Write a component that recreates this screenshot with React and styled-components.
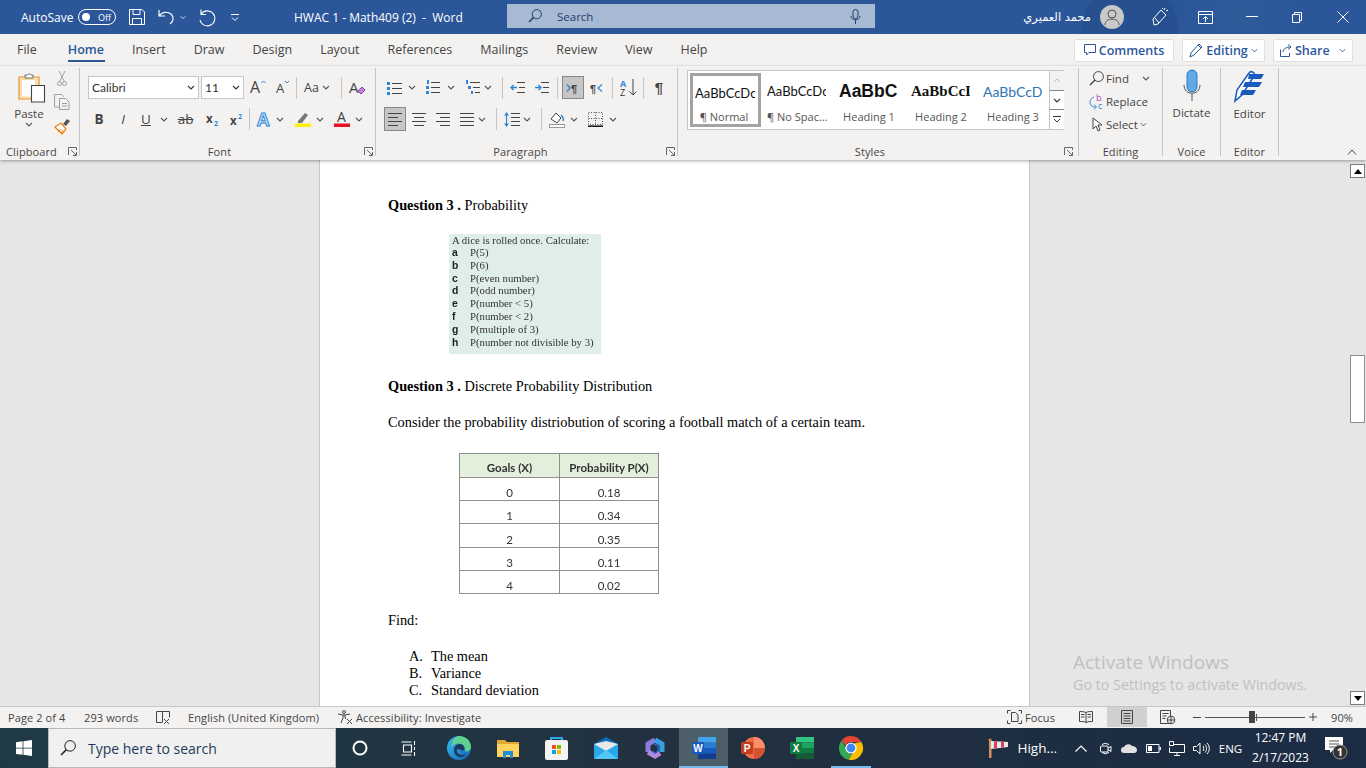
import React from 'react';
import styled, { createGlobalStyle } from 'styled-components';

const Global = createGlobalStyle`
  html, body { margin: 0; padding: 0; overflow: hidden; }
  body { font-family: "Open Sans", "Liberation Sans", sans-serif; }
  * { box-sizing: border-box; }
`;
const Shell = styled.div`display:flex;flex-direction:column;width:1366px;height:768px;overflow:hidden;background:#f3f2f1;`;
const Slot = styled.div`
  display:flex;align-items:center;flex:none;justify-content:${p => p.$j || 'center'};
  width:${p => p.$w}px;margin-left:${p => p.$l || 0}px;white-space:nowrap;height:100%;
`;
const SelBtn = styled(Slot)`background:#c8c6c4;outline:1px solid #8a8886;outline-offset:-1px;`;
const GlyphBtn = styled(Slot)`
  font-size:${p => p.$fs || 13.5}px;color:#444;font-weight:${p => p.$fw || 400};font-style:${p => p.$fi || 'normal'};
  text-decoration:${p => p.$td || 'none'};font-family:${p => p.$ff || 'inherit'};
`;
const AaBtn = styled(Slot)`font-size:12.5px;color:#444;gap:3px;`;
const SelectedView = styled(Slot)`background:#d2d0ce;`;

/* title bar */
const TitleBar = styled.header`
  display:flex;align-items:center;height:34px;flex:none;color:#fff;font-size:12px;
  background:radial-gradient(circle at 1240px 10px,#2f5a9a 0,#2b579a 55px,transparent 56px),radial-gradient(circle at 1130px 30px,#26508f 0,#26508f 48px,transparent 49px),#2b579a;
`;
const AutoToggle = styled.div`
  display:flex;align-items:center;justify-content:space-between;width:38px;height:16px;border:1px solid #fff;border-radius:8px;padding:0 4px 0 3px;font-size:9px;
  &::before{content:"";width:8px;height:8px;border-radius:50%;background:#fff;}
`;
const SearchBox = styled.div`
  display:flex;align-items:center;width:368px;height:24px;margin:0 0 2px 48px;background:#a7b9d3;color:#23406f;font-size:11.5px;flex:none;
`;
const UserName = styled.span`font-family:"DejaVu Sans",sans-serif;font-size:11.5px;`;
const Avatar = styled.div`display:flex;align-items:center;justify-content:center;width:24px;height:24px;border-radius:50%;background:#c9c9c9;flex:none;margin-left:9px;`;

/* tabs */
const TabRow = styled.nav`display:flex;align-items:center;height:32px;flex:none;padding:0 0 2px 17px;font-size:12.5px;color:#444;`;
const Tab = styled.div`
  position:relative;margin-right:${p => p.$gap || 28}px;white-space:nowrap;
  font-weight:${p => p.$on ? 600 : 400};color:${p => p.$on ? '#2b579a' : '#444'};
  ${p => p.$on && `&::after{content:"";position:absolute;left:0;right:-1px;bottom:-4px;height:2px;background:#2b579a;}`}
`;
const TabActions = styled.div`display:flex;align-items:center;gap:8px;margin:2px 0 0 auto;padding-right:13px;`;
const ActionBtn = styled.div`
  display:flex;align-items:center;justify-content:center;gap:3px;width:${p => p.$w}px;height:23px;background:#fff;border:1px solid #e1dfdd;border-radius:2px;color:#2b579a;font-weight:600;font-size:12.5px;
`;

/* ribbon */
const Ribbon = styled.section`
  display:flex;height:94px;flex:none;padding-top:2px;position:relative;z-index:2;background:#f3f2f1;box-shadow:0 1px 3px rgba(0,0,0,.35);
`;
const Group = styled.div`
  display:flex;flex-direction:column;flex:none;width:${p => p.$w}px;height:88px;border-right:1px solid #c8c6c4;
`;
const GroupBody = styled.div`height:76px;flex:none;display:flex;flex-direction:column;`;
const RowStack = styled(GroupBody)`padding-top:8px;gap:8px;`;
const Row = styled.div`display:flex;align-items:center;height:${p => p.$h || 24}px;flex:none;`;
const GroupFoot = styled.div`display:flex;align-items:center;height:14px;margin-bottom:-2px;font-size:11px;color:#484644;letter-spacing:.1px;`;
const FootLabel = styled.div`flex:1;text-align:center;`;
const Launcher = styled.div`display:flex;justify-content:flex-end;width:${p => p.$w || 14}px;padding-right:${p => p.$r || 2}px;flex:none;`;
const Combo = styled.div`
  display:flex;align-items:center;justify-content:space-between;width:${p => p.$w}px;margin-left:${p => p.$l || 0}px;height:23px;padding:0 3px;flex:none;
  background:#fff;border:1px solid #c8c6c4;font-size:12px;color:#333;font-family:"Lato","Open Sans",sans-serif;
`;
const VSep = styled.div`width:1px;height:22px;background:#c8c6c4;flex:none;margin-left:${p => p.$l || 0}px;`;
const PasteCol = styled.div`display:flex;flex-direction:column;align-items:center;width:58px;padding-top:4px;flex:none;font-size:11.5px;color:#444;`;
const PasteIcon = styled.div`margin-left:5px;`;
const PasteLabel = styled.div`margin-top:3px;line-height:16px;`;
const SideCol = styled.div`display:flex;flex-direction:column;align-items:center;width:14px;padding-top:3px;margin-left:-3px;`;
const SideItem = styled.div`display:flex;justify-content:center;width:16px;flex:none;margin-top:${p => p.$mt}px;`;
const ClipRow = styled.div`display:flex;`;

const Gallery = styled.div`display:flex;margin:2px 0 0 9px;width:377px;height:60px;background:#fff;border:1px solid #c8c6c4;`;
const StyleItem = styled.div`
  flex:none;width:${p => p.$sel ? '71px' : '72px'};height:${p => p.$sel ? '54px' : '58px'};margin:${p => p.$sel ? '2px 0 0 2px' : '0'};padding-left:${p => p.$sel ? '2px' : '6px'};
  ${p => p.$sel ? 'border:3px solid #a5a3a1;' : ''}
`;
const Preview = styled.div`
  height:${p => p.$sel ? '34px' : '39px'};width:${p => p.$sel ? '60px' : '59px'};overflow:hidden;white-space:nowrap;display:flex;align-items:center;
  padding-top:${p => p.$sel ? '0' : '1px'};
  font:${p => p.$font};color:${p => p.$color || '#111'};
`;
const StyleName = styled.div`font-size:11px;color:#555;white-space:nowrap;text-align:center;width:${p => p.$sel ? '58px' : '60px'};line-height:14px;`;
const GalleryBtns = styled.div`display:flex;flex-direction:column;margin-left:auto;width:15px;flex:none;`;
const GalleryBtn = styled.div`display:flex;align-items:center;justify-content:center;flex:1;border-left:1px solid #c8c6c4;border-top:${p => p.$first ? 'none' : '1px solid #8a8886'};background:${p => p.$first ? '#f3f2f1' : '#fff'};`;
const StackCol = styled(GroupBody)`padding:0 0 0 10px;margin-top:-1px;margin-bottom:1px;font-size:11.5px;color:#444;`;
const EditRow = styled.div`display:flex;align-items:center;height:23px;gap:2px;`;
const BigCol = styled(GroupBody)`align-items:center;padding-top:2px;font-size:11.5px;color:#444;`;
const BigLabel = styled.div`margin-top:4px;line-height:16px;`;
const Collapse = styled.div`flex:1;display:flex;align-items:flex-end;justify-content:flex-end;padding:0 9px 5px 0;`;

/* document */
const DocArea = styled.main`display:flex;flex:1;min-height:0;background:#e6e6e6;position:relative;`;
const Page = styled.article`
  width:711px;margin-left:319px;height:100%;overflow:hidden;flex:none;background:#fff;border-left:1px solid #c6c6c6;border-right:1px solid #c6c6c6;
  padding:36px 0 0 68px;font-family:"Liberation Serif",serif;font-size:14.34px;color:#000;
`;
const Line = styled.div`height:${p => p.$h || 18}px;line-height:18px;margin-top:${p => p.$mt || 0}px;white-space:nowrap;`;
const ListLine = styled(Line)`display:flex;padding-left:21px;`;
const Marker = styled.span`width:22px;flex:none;`;
const Exercise = styled.div`
  width:152px;height:120px;margin:20px 0 0 61px;background:#dfeeeb;padding:0 3px;color:#333;font-size:10.75px;line-height:12.75px;filter:blur(.35px);
`;
const ExTop = styled.div`height:12px;`;
const ExRow = styled.div`display:flex;align-items:baseline;height:12.8px;white-space:nowrap;`;
const ExKey = styled.span`width:18px;flex:none;font-family:"Liberation Sans",sans-serif;font-weight:700;font-size:10.4px;color:#222;`;
const DataTable = styled.table`
  border-collapse:collapse;width:200px;height:140px;margin:22px 0 0 71px;font-family:"Lato","Open Sans",sans-serif;font-size:11.5px;color:#333;filter:blur(.2px);
  th,td{border:1px solid #8f8f8f;text-align:center;padding:0;vertical-align:bottom;padding-bottom:1px;}
  th{background:#e2efda;font-weight:700;height:24px;padding-bottom:3px;}
  td{height:23.2px;}
`;
const GoalsHead = styled.th`width:100px;`;
const Scroller = styled.aside`display:flex;flex-direction:column;align-items:center;width:17px;margin-left:auto;padding:4px 0 1px 0;`;
const ArrowBtn = styled.div`display:flex;align-items:center;justify-content:center;width:15px;height:14px;background:#fff;border:1px solid #7a7a7a;flex:none;`;
const Thumb = styled.div`width:15px;height:68px;margin-top:177px;margin-bottom:auto;background:#fff;border:1px solid #8f8f8f;flex:none;`;
const Watermark = styled.div`position:absolute;left:1073px;top:490px;color:#c0c0c0;pointer-events:none;white-space:nowrap;font-family:"Open Sans",sans-serif;`;
const WmBig = styled.div`font-size:19px;line-height:24px;`;
const WmSmall = styled.div`font-size:14.3px;line-height:22px;`;

/* status */
const StatusBar = styled.footer`
  display:flex;align-items:center;height:22px;flex:none;background:#f3f2f1;border-top:1px solid #c8c6c4;font-size:11px;letter-spacing:.1px;color:#444;padding-bottom:1px;
`;
const ZoomTrack = styled.div`width:100px;height:1px;background:#555;margin-left:4px;flex:none;position:relative;`;
const ZoomKnob = styled.div`position:absolute;left:44px;top:-6px;width:6px;height:12px;background:#444;`;
const ZoomTick = styled.div`position:absolute;left:51px;top:-3px;width:1px;height:7px;background:#555;`;

/* taskbar */
const TaskBar = styled.footer`
  display:flex;align-items:stretch;height:40px;flex:none;color:#fff;background:linear-gradient(90deg,#1f3a46 0,#22313f 50%,#1a2b44 100%);
`;
const TaskSearch = styled.div`
  display:flex;align-items:center;width:288px;background:#f0f0f0;border:1px solid #b8b8b8;padding-left:11px;color:#1f3a5a;font-size:14px;gap:12px;flex:none;
`;
const TaskApp = styled.div`
  display:flex;align-items:center;justify-content:center;flex:none;width:${p => p.$w || 49}px;margin-left:${p => p.$l || 0}px;
  ${p => p.$active && 'background:#4c5e68;'}
  ${p => p.$bar && 'box-shadow:inset 0 -2px 0 #76b9ed;'}
`;
const TrayText = styled(Slot)`font-size:${p => p.$fs || 12}px;color:#fff;`;
const Clock = styled.div`display:flex;flex-direction:column;align-items:center;width:76px;margin-left:${p => p.$l}px;font-size:12px;line-height:20px;flex:none;justify-content:center;`;

/* icons */
const Chev = ({ c = '#555', w = 8 }) => <svg width={w} height="5" viewBox="0 0 8 5"><path d="M1 1l3 3 3-3" stroke={c} strokeWidth="1.1" fill="none" /></svg>;
const S = ({ w, h, children }) => <svg width={w} height={h} viewBox={`0 0 ${w} ${h}`} style={{ display: 'block', overflow: 'visible' }}>{children}</svg>;
const L = ({ d, c = '#444', sw = 1 }) => <path d={d} stroke={c} strokeWidth={sw} fill="none" />;
const Launch = () => <S w={9} h={9}><L d="M.5 8V.5H8.5V3M3 3l5.5 5.5M5 8.5h3.5V5" c="#666" /></S>;
const Blue = '#2b88d8';
const Bullet = () => <S w={15} h={14}><path d="M0 1h3v3H0zM0 6h3v3H0zM0 11h3v3H0z" fill={Blue} /><L d="M5 2.5h10M5 7.5h10M5 12.5h10" /></S>;
const Numbered = () => <S w={14} h={15}><path d="M1 0h2v4H1zM0 6h3v3H0zM0 11h3v3H0z" fill={Blue} /><L d="M5 2.5h9M5 7.5h9M5 12.5h9" /></S>;
const Multi = () => <S w={15} h={15}><path d="M1 0h2v4H1zM3 6h3v3H3zM6 11h2v3H6z" fill={Blue} /><L d="M5 2.5h10M8 7.5h7M10 12.5h5" /></S>;
const Indent = ({ inc }) => <S w={14} h={11}><L d="M6 .5h8M8 5.5h6M6 10.5h8" /><L d={inc ? 'M0 5.5h6M3.5 3l2.5 2.5L3.5 8' : 'M6 5.5H0M2.5 3L0 5.5 2.5 8'} c={Blue} sw={1.4} /></S>;
const Align = ({ type }) => {
  const m = {
    l: 'M0 .5h14M0 4.5h10M0 8.5h14M0 12.5h10',
    c: 'M0 .5h14M2 4.5h10M0 8.5h14M2 12.5h10',
    r: 'M0 .5h14M4 4.5h10M0 8.5h14M4 12.5h10',
    j: 'M0 .5h14M0 4.5h14M0 8.5h14M0 12.5h14',
  };
  return <S w={14} h={13}><L d={m[type]} /></S>;
};
const FontA = ({ size = 16 }) => <text x="0" y="13" fontSize={size} fill="#444" fontFamily="Open Sans">A</text>;

const Paste = () => (
  <S w={28} h={31}>
    <path d="M1 5h20v22H1z" fill="#fce4b6" stroke="#e8912d" strokeWidth="1.2" />
    <path d="M3.5 7.5h14V25h-14z" fill="#fff" stroke="#f5d79e" />
    <path d="M7 6V3h2.5a2 2 0 0 1 3.5 0H15v3z" fill="#fff" stroke="#666" />
    <path d="M13.5 13.5h13v16.5h-13z" fill="#fff" stroke="#444" strokeWidth="1.1" />
  </S>
);
const Cut = () => <S w={10} h={15}><L d="M2 0l5 10M8 0L3 10" c="#a19f9d" /><circle cx="2.5" cy="12.5" r="2" fill="none" stroke="#a19f9d" /><circle cx="7.5" cy="12.5" r="2" fill="none" stroke="#a19f9d" /></S>;
const CopyI = () => <S w={16} h={16}><L d="M.5.5h7l2 2V3M.5.5V13H5M5.5 4.5h6l3.5 3.5v7.500h-9.500zM8 9.500h5M8 12h5" c="#a19f9d" /></S>;
const Painter = () => <S w={16} h={16}><path d="M1 9l6-4 5 6-4 5z" fill="#fff" stroke="#e8811a" strokeWidth="1.3" /><path d="M4 14l3-3M7 15l2-3" stroke="#e8811a" /><path d="M9 6l4-5 3 2-4 5z" fill="#555" /></S>;

const Sort = () => <S w={18} h={18}><text x="0" y="8" fontSize="9" fontWeight="700" fill={Blue} fontFamily="Open Sans">A</text><text x="0" y="17" fontSize="9" fill="#333" fontFamily="Open Sans">Z</text><L d="M13 0v16M9.5 12.5L13 16l3.5-3.5" /></S>;
const LineSpace = () => <S w={16} h={15}><L d="M7 1.5h9M7 5.5h9M7 9.5h9M7 13.5h9" /><path d="M2.5 0l2.5 3.5H0zM2.5 15L0 11.5h5z" fill={Blue} /><path d="M2.5 3v9" stroke={Blue} strokeWidth="1.2" /></S>;
const Shading = () => <S w={16} h={17}><path d="M2 8l5-6 5 5-4 5z" fill="#fff" stroke="#444" /><path d="M12 4c2 2 3 4 2 6" stroke={Blue} strokeWidth="1.5" fill="none" /><rect x=".5" y="13.5" width="15" height="3" fill="#fff" stroke="#999" /></S>;
const Borders = () => <S w={15} h={15}><path d="M.5.5h14v12H.5zM7.5.5v12M.5 6.5h14" stroke="#555" strokeDasharray="1 1.5" fill="none" /><path d="M0 14.2h15" stroke="#000" strokeWidth="1.4" /></S>;
const MagI = ({ c = '#444', s = 15 }) => <S w={s} h={s}><circle cx={s * .63} cy={s * .37} r={s * .33} fill="none" stroke={c} /><L d={`M${s * .4} ${s * .6}L1 ${s - 1}`} c={c} sw={1.5} /></S>;

const Word = () => (
  <S w={24} h={22}>
    <path d="M6 0h18v5.5H6z" fill="#41a5ee" /><path d="M6 5.5h18V11H6z" fill="#2b7cd3" /><path d="M6 11h18v5.5H6z" fill="#185abd" /><path d="M6 16.5h18V22H6z" fill="#103f91" />
    <rect x="0" y="5" width="12" height="12" rx="1" fill="#185abd" />
    <text x="6" y="14.5" textAnchor="middle" fontSize="10" fontWeight="700" fill="#fff" fontFamily="Liberation Sans">W</text>
  </S>
);
const Ppt = () => (
  <S w={24} h={22}>
    <circle cx="13" cy="11" r="11" fill="#ed6c47" /><path d="M13 0a11 11 0 0 1 11 11H13z" fill="#ff8f6b" /><path d="M13 11h11a11 11 0 0 1-11 11z" fill="#d35230" />
    <rect x="0" y="5" width="12" height="12" rx="1" fill="#c43e1c" />
    <text x="6" y="14.5" textAnchor="middle" fontSize="10" fontWeight="700" fill="#fff" fontFamily="Liberation Sans">P</text>
  </S>
);
const Xl = () => (
  <S w={24} h={22}>
    <path d="M6 0h18v5.5H6z" fill="#33c481" /><path d="M6 5.5h18V11H6z" fill="#21a366" /><path d="M6 11h18v5.5H6z" fill="#107c41" /><path d="M6 16.5h18V22H6z" fill="#185c37" />
    <rect x="0" y="5" width="12" height="12" rx="1" fill="#107c41" />
    <text x="6" y="14.5" textAnchor="middle" fontSize="10" fontWeight="700" fill="#fff" fontFamily="Liberation Sans">X</text>
  </S>
);
const Chrome = () => (
  <S w={24} h={24}>
    <path d="M12 0a12 12 0 0 1 10.4 6H12a6 6 0 0 0-5.6 3.8L2.6 4.4A12 12 0 0 1 12 0z" fill="#ea4335" />
    <path d="M2.6 4.4l5 8.6a5 5 0 0 0 5.6 5l-3.5 5.8A12 12 0 0 1 2.6 4.4z" fill="#34a853" />
    <path d="M22.4 6A12 12 0 0 1 9.7 23.8l5.2-9A6 6 0 0 0 15.500 7z" fill="#fbbc04" />
    <circle cx="12" cy="12" r="5.6" fill="#fff" /><circle cx="12" cy="12" r="4.4" fill="#4285f4" />
  </S>
);
const Edge = () => (
  <S w={24} h={24}>
    <defs><linearGradient id="eg" x1="0" y1="0" x2="1" y2="1"><stop offset="0" stopColor="#35c1f1" /><stop offset=".5" stopColor="#2a8fd6" /><stop offset="1" stopColor="#0f5ea8" /></linearGradient></defs>
    <circle cx="12" cy="12" r="12" fill="url(#eg)" />
    <path d="M12 0c7 0 12 5 12 11 0 3-3 5-6 4.500 1.500-4-2-8-6-8-4 0-7 2-8 5C5 5 8 0 12 0z" fill="#5fd38d" />
    <path d="M7 14c0-4 3-6 6-6 3 0 5 3 4 6-2 1-4 0-5-1-2 0-3 1-2 3 1 3 6 4 9 2-3 5-12 4-12-4z" fill="#1b3a5c" />
  </S>
);
const Folder = () => (
  <S w={22} h={20}>
    <path d="M0 2h8l2 2h12v15H0z" fill="#e3a72f" /><path d="M0 6h22v13H0z" fill="#ffd35c" />
    <path d="M6 13h10v7h-3v-3H9v3H6z" fill="#1f8fd8" />
  </S>
);
const Store = () => (
  <S w={23} h={23}>
    <path d="M6 4V1h11v3" stroke="#27a9e6" strokeWidth="2" fill="none" />
    <rect x="0" y="3" width="23" height="20" rx="2" fill="#f3f3f3" />
    <path d="M7 8h4v4H7z" fill="#f25022" /><path d="M12 8h4v4h-4z" fill="#7fba00" /><path d="M7 13h4v4H7z" fill="#00a4ef" /><path d="M12 13h4v4h-4z" fill="#ffb900" />
  </S>
);
const Mail = () => (
  <S w={24} h={22}>
    <path d="M12 0l12 7v15H0V7z" fill="#0f6cbd" /><path d="M0 7h24v15H0z" fill="#28a8ea" /><path d="M0 7l12 7 12-7-12-3z" fill="#e8e8e8" /><path d="M0 22l12-9 12 9z" fill="#50c7f5" />
  </S>
);
const M365 = () => (
  <S w={20} h={22}>
    <path d="M10 3L3 7v8" stroke="#8a7de0" strokeWidth="5" fill="none" />
    <path d="M10 3l7 4v8" stroke="#35a0e0" strokeWidth="5" fill="none" />
    <path d="M3 15l7 4 5-3" stroke="#b488dc" strokeWidth="5" fill="none" />
    <path d="M9 7l4 2v5l-3 2-3-2" stroke="#2a66c8" strokeWidth="1.500" fill="none" />
  </S>
);

const styles = [
  { t: 'AaBbCcDc', n: '¶ Normal', f: '400 13px Lato', sel: true },
  { t: 'AaBbCcDc', n: '¶ No Spac...', f: '400 13px Lato' },
  { t: 'AaBbC', n: 'Heading 1', f: '700 17.5px "Liberation Sans"' },
  { t: 'AaBbCcD', n: 'Heading 2', f: '700 15px "Liberation Serif"' },
  { t: 'AaBbCcD', n: 'Heading 3', f: '400 14px Lato', c: '#2e74b5' },
];

export default function App() {
  return (
    <Shell>
      <Global />
      <TitleBar>
        <Slot $l={21} $w={50} $j="flex-start">AutoSave</Slot>
        <Slot $l={7} $w={38}><AutoToggle>Off</AutoToggle></Slot>
        <Slot $l={13} $w={16}><S w={16} h={16}><L d="M.5.5h12.500l2.500 2.500v12.500H.5zM4 .5v5h7v-5M3.500 15.500v-6h9v6" c="#fff" /></S></Slot>
        <Slot $l={13} $w={17}><S w={17} h={16}><L d="M1 1v6h6M1 7c3-4 8-5 12-2 3 3 3 7-1 10" c="#fff" sw={1.2} /></S></Slot>
        <Slot $l={5} $w={6}><Chev c="#fff" w={6} /></Slot>
        <Slot $l={12} $w={16}><S w={16} h={17}><L d="M3 .5v5h5M3.200 5A7.500 7.500 0 1 1 2 11" c="#fff" sw={1.1} /></S></Slot>
        <Slot $l={17} $w={8}><S w={8} h={7}><L d="M0 .5h8M1 3.500l3 3 3-3" c="#fff" /></S></Slot>
        <Slot $l={55} $w={165} $j="flex-start">HWAC 1 - Math409 (2)&nbsp; -&nbsp; Word</Slot>
        <SearchBox>
          <Slot $l={21} $w={14}><MagI c="#23406f" s={14} /></Slot>
          <Slot $l={15} $w={296} $j="flex-start">Search</Slot>
          <Slot $l={-4} $w={12}><S w={10} h={15}><rect x="3" y=".5" width="5" height="9" rx="2.500" fill="none" stroke="#23406f" /><L d="M1 7c0 5 9 5 9 0M5.500 11v4" c="#23406f" /></S></Slot>
        </SearchBox>
        <Slot $l={148} $w={68} $j="flex-end"><UserName dir="rtl">محمد العميري</UserName></Slot>
        <Avatar><S w={16} h={16}><circle cx="8" cy="5" r="4" fill="none" stroke="#555" /><L d="M1 16c0-8 14-8 14 0" c="#555" /></S></Avatar>
        <Slot $l={28} $w={16}><S w={16} h={18}><L d="M2 17l-1-6 8-9 5 5-8 9zM3 10l4 5M10 1l1-1M14 3l2-1M12 2l1-2" c="#fff" /></S></Slot>
        <Slot $l={29} $w={16}><S w={15} h={13}><L d="M.5.500h14v12H.5zM.5 3.500h14M7.500 11V6M5 8l2.500-2.500L10 8" c="#fff" /></S></Slot>
        <Slot $l={33} $w={12}><S w={12} h={2}><path d="M0 .5h12" stroke="#fff" /></S></Slot>
        <Slot $l={33} $w={11}><S w={10} h={11}><L d="M.5 2.500h7v8h-7zM2.500 2.500V.5h7v8h-2" c="#fff" /></S></Slot>
        <Slot $l={35} $w={12}><S w={12} h={12}><L d="M.5.500l11 11M11.500.5l-11 11" c="#fff" /></S></Slot>
      </TitleBar>

      <TabRow>
        <Tab $gap={31}>File</Tab>
        <Tab $on>Home</Tab>
        <Tab>Insert</Tab><Tab>Draw</Tab><Tab>Design</Tab><Tab>Layout</Tab><Tab>References</Tab><Tab>Mailings</Tab><Tab>Review</Tab><Tab>View</Tab><Tab>Help</Tab>
        <TabActions>
          <ActionBtn $w={100}><S w={12} h={12}><L d="M.5.500h11v8H5L2.500 11V8.500h-2z" c="#2b579a" /></S>Comments</ActionBtn>
          <ActionBtn $w={83}><S w={14} h={15}><L d="M1 14l1-4 8-9 3 3-8 8zM9 2l3 3" c="#2b579a" /></S>Editing <Chev c="#2b579a" w={7} /></ActionBtn>
          <ActionBtn $w={80}><S w={12} h={13}><L d="M.5 5.500v7h9V9M3 8c0-3 3-5 8-5M8 .5L11 3 8 5.500" c="#2b579a" /></S>Share &nbsp;<Chev c="#2b579a" w={7} /></ActionBtn>
        </TabActions>
      </TabRow>

      <Ribbon>
        <Group $w={80}>
          <GroupBody>
            <ClipRow>
              <PasteCol><PasteIcon><Paste /></PasteIcon><PasteLabel>Paste</PasteLabel><Chev /></PasteCol>
              <SideCol>
                <Cut />
                <SideItem $mt={8}><CopyI /></SideItem>
                <SideItem $mt={8}><Painter /></SideItem>
              </SideCol>
            </ClipRow>
          </GroupBody>
          <GroupFoot><FootLabel>Clipboard</FootLabel><Launcher $w={16}><Launch /></Launcher></GroupFoot>
        </Group>

        <Group $w={296}>
          <RowStack>
            <Row $h={23}>
              <Combo $l={8} $w={111}>Calibri<Chev c="#333" /></Combo>
              <Combo $l={2} $w={43}>11<Chev c="#333" /></Combo>
              <Slot $l={6} $w={16}><S w={16} h={15}><FontA size={16} /><L d="M11.500 3L13.500 1l2 2" c={Blue} /></S></Slot>
              <Slot $l={10} $w={13}><S w={13} h={15}><FontA size={13} /><L d="M9 1l2 2 2-2" c={Blue} /></S></Slot>
              <VSep $l={7} />
              <AaBtn $l={7} $w={31} $j="flex-start">Aa<Chev /></AaBtn>
              <VSep $l={6} />
              <Slot $l={7} $w={16}><S w={16} h={16}><FontA size={15} /><path d="M9 11l4-4 3 3-4 4z" fill="#c77dd6" stroke="#8e3fa8" /></S></Slot>
            </Row>
            <Row>
              <GlyphBtn $l={14} $w={10} $fw={700}>B</GlyphBtn>
              <GlyphBtn $l={15} $w={8} $fi="italic">I</GlyphBtn>
              <GlyphBtn $l={14} $w={10} $td="underline">U</GlyphBtn>
              <Slot $l={9} $w={8}><Chev /></Slot>
              <GlyphBtn $l={10} $w={15} $td="line-through">ab</GlyphBtn>
              <Slot $l={13} $w={12}><S w={12} h={13}><text x="0" y="10" fontSize="11.500" fontWeight="700" fill="#444" fontFamily="Open Sans">x</text><text x="8" y="13" fontSize="7" fontWeight="700" fill={Blue} fontFamily="Open Sans">2</text></S></Slot>
              <Slot $l={12} $w={11}><S w={12} h={13}><text x="0" y="12" fontSize="11.500" fontWeight="700" fill="#444" fontFamily="Open Sans">x</text><text x="8" y="6" fontSize="7" fontWeight="700" fill={Blue} fontFamily="Open Sans">2</text></S></Slot>
              <VSep $l={8} />
              <Slot $l={7} $w={16}><S w={16} h={15}><text x="0" y="14" fontSize="18" fontWeight="700" fill="#b9dcf4" stroke={Blue} strokeWidth=".9" fontFamily="Open Sans">A</text></S></Slot>
              <Slot $l={3} $w={8}><Chev /></Slot>
              <Slot $l={11} $w={16}><S w={16} h={16}><path d="M3 10l7-8 3 2-6 8-4 0z" fill="#777" /><rect x="0" y="12.500" width="16" height="3.500" fill="#ffef00" /></S></Slot>
              <Slot $l={5} $w={8}><Chev /></Slot>
              <Slot $l={10} $w={16}><S w={16} h={16}><text x="3" y="11" fontSize="14" fill="#444" fontFamily="Open Sans">A</text><rect x="0" y="12.500" width="16" height="3.500" fill="#e81123" /></S></Slot>
              <Slot $l={5} $w={8}><Chev /></Slot>
            </Row>
          </RowStack>
          <GroupFoot><FootLabel>Font</FootLabel><Launcher $w={16}><Launch /></Launcher></GroupFoot>
        </Group>

        <Group $w={302}>
          <RowStack>
            <Row $h={23}>
              <Slot $l={11} $w={15}><Bullet /></Slot><Slot $l={6} $w={8}><Chev /></Slot>
              <Slot $l={10} $w={14}><Numbered /></Slot><Slot $l={7} $w={8}><Chev /></Slot>
              <Slot $l={10} $w={15}><Multi /></Slot><Slot $l={4} $w={8}><Chev /></Slot>
              <VSep $l={10} />
              <Slot $l={8} $w={14}><Indent /></Slot><Slot $l={10} $w={14}><Indent inc /></Slot>
              <VSep $l={8} />
              <SelBtn $l={4} $w={22}><S w={12} h={10}><L d="M0 1.500L3 5 0 8.500" c={Blue} sw={1.5} /><text x="4" y="9.500" fontSize="11" fontWeight="700" fill="#444" fontFamily="Liberation Sans">¶</text></S></SelBtn>
              <Slot $l={6} $w={13}><S w={13} h={10}><text x="0" y="9.500" fontSize="11" fontWeight="700" fill="#444" fontFamily="Liberation Sans">¶</text><L d="M12 1.500L8 5l4 3.500" c={Blue} sw={1.3} /></S></Slot>
              <VSep $l={9} />
              <Slot $l={7} $w={17}><Sort /></Slot>
              <VSep $l={6} />
              <GlyphBtn $l={10} $w={10} $fs={15} $fw={700} $ff='"Liberation Sans"'>¶</GlyphBtn>
            </Row>
            <Row>
              <SelBtn $l={8} $w={22}><Align type="l" /></SelBtn>
              <Slot $l={6} $w={14}><Align type="c" /></Slot>
              <Slot $l={10} $w={14}><Align type="r" /></Slot>
              <Slot $l={10} $w={14}><Align type="j" /></Slot>
              <Slot $l={4} $w={8}><Chev /></Slot>
              <VSep $l={10} />
              <Slot $l={7} $w={16}><LineSpace /></Slot><Slot $l={3} $w={8}><Chev /></Slot>
              <VSep $l={10} />
              <Slot $l={7} $w={16}><Shading /></Slot><Slot $l={5} $w={8}><Chev /></Slot>
              <Slot $l={10} $w={15}><Borders /></Slot><Slot $l={6} $w={8}><Chev /></Slot>
            </Row>
          </RowStack>
          <GroupFoot><FootLabel>Paragraph</FootLabel><Launcher $w={12}><Launch /></Launcher></GroupFoot>
        </Group>

        <Group $w={401}>
          <GroupBody>
            <Gallery>
              {styles.map(s => (
                <StyleItem key={s.n} $sel={s.sel}>
                  <Preview $sel={s.sel} $font={s.f} $color={s.c}>{s.t}</Preview>
                  <StyleName $sel={s.sel}>{s.n}</StyleName>
                </StyleItem>
              ))}
              <GalleryBtns>
                <GalleryBtn $first><S w={8} h={5}><L d="M1 4l3-3 3 3" c="#bbb" /></S></GalleryBtn>
                <GalleryBtn><Chev c="#333" /></GalleryBtn>
                <GalleryBtn><S w={8} h={7}><L d="M0 .5h8M1 3l3 3 3-3" c="#333" /></S></GalleryBtn>
              </GalleryBtns>
            </Gallery>
          </GroupBody>
          <GroupFoot><FootLabel>Styles</FootLabel><Launcher $w={16} $r={5}><Launch /></Launcher></GroupFoot>
        </Group>

        <Group $w={84}>
          <StackCol>
            <EditRow><Slot $w={15}><MagI /></Slot>Find<Slot $l={11} $w={8}><Chev /></Slot></EditRow>
            <EditRow><Slot $w={15}><S w={16} h={16}><text x="7" y="7" fontSize="9" fill="#b146c2" fontFamily="Open Sans">b</text><text x="9" y="15" fontSize="9" fill={Blue} fontFamily="Open Sans">c</text><L d="M5 3C1 4 0 9 2 11c1 2 3 2 5 2M5 10.500L7.500 13 5 15.500" c={Blue} /></S></Slot>Replace</EditRow>
            <EditRow><Slot $w={15}><S w={12} h={15}><path d="M2 1v11l3-3 2 5 2-1-2-5h4z" fill="#fff" stroke="#444" /></S></Slot>Select<Chev w={7} /></EditRow>
          </StackCol>
          <GroupFoot><FootLabel>Editing</FootLabel></GroupFoot>
        </Group>

        <Group $w={58}>
          <BigCol>
            <S w={18} h={31}><rect x="4" y="0" width="10" height="22" rx="5" fill="#62a8e5" stroke="#2b78c4" /><L d="M1 15c0 11 16 11 16 0M9 24v7" c="#555" /></S>
            <BigLabel>Dictate</BigLabel>
          </BigCol>
          <GroupFoot><FootLabel>Voice</FootLabel></GroupFoot>
        </Group>

        <Group $w={58}>
          <BigCol>
            <S w={32} h={32}><path d="M1 31l2-11L15 3c2-3 7 0 5 3L8 25z" fill="#fff" stroke="#185abd" strokeWidth="1.500" /><path d="M15 4h15l-3 5H14zM11 12h17l-3 5H9zM8 20h14l-3 5H6z" fill="#185abd" /></S>
            <BigLabel>Editor</BigLabel>
          </BigCol>
          <GroupFoot><FootLabel>Editor</FootLabel></GroupFoot>
        </Group>

        <Collapse><S w={10} h={6}><L d="M1 5.500L5 1l4 4.500" c="#444" /></S></Collapse>
      </Ribbon>

      <DocArea>
        <Page>
          <Line><b>Question 3 .</b> Probability</Line>
          <Exercise>
            <ExTop>A dice is rolled once. Calculate:</ExTop>
            {[['a', 'P(5)'], ['b', 'P(6)'], ['c', 'P(even number)'], ['d', 'P(odd number)'], ['e', 'P(number < 5)'], ['f', 'P(number < 2)'], ['g', 'P(multiple of 3)'], ['h', 'P(number not divisible by 3)']].map(([k, t]) => (
              <ExRow key={k}><ExKey>{k}</ExKey>{t}</ExRow>
            ))}
          </Exercise>
          <Line $mt={23}><b>Question 3 .</b> Discrete Probability Distribution</Line>
          <Line $mt={18}>Consider the probability distriobution of scoring a football match of a certain team.</Line>
          <DataTable>
            <thead><tr><GoalsHead>Goals (X)</GoalsHead><th>Probability P(X)</th></tr></thead>
            <tbody>
              {[['0', '0.18'], ['1', '0.34'], ['2', '0.35'], ['3', '0.11'], ['4', '0.02']].map(([a, b]) => <tr key={a}><td>{a}</td><td>{b}</td></tr>)}
            </tbody>
          </DataTable>
          <Line $mt={17}>Find:</Line>
          <ListLine $mt={18} $h={17}><Marker>A.</Marker>The mean</ListLine>
          <ListLine $h={17}><Marker>B.</Marker>Variance</ListLine>
          <ListLine $h={17}><Marker>C.</Marker>Standard deviation</ListLine>
        </Page>
        <Scroller>
          <ArrowBtn><S w={8} h={5}><path d="M0 5l4-5 4 5z" fill="#000" /></S></ArrowBtn>
          <Thumb />
          <ArrowBtn><S w={8} h={5}><path d="M0 0l4 5 4-5z" fill="#000" /></S></ArrowBtn>
        </Scroller>
        <Watermark><WmBig>Activate Windows</WmBig><WmSmall>Go to Settings to activate Windows.</WmSmall></Watermark>
      </DocArea>

      <StatusBar>
        <Slot $l={8} $w={58} $j="flex-start">Page 2 of 4</Slot>
        <Slot $l={18} $w={54} $j="flex-start">293 words</Slot>
        <Slot $l={18} $w={14}><S w={14} h={13}><L d="M.5.500h13v6M.5.500v11H6M6.500.5v11M8 8l5 5M13 8l-5 5" /></S></Slot>
        <Slot $l={18} $w={132} $j="flex-start">English (United Kingdom)</Slot>
        <Slot $l={18} $w={14}><S w={14} h={14}><circle cx="6" cy="2" r="1.500" fill="none" stroke="#444" /><L d="M0 4l5 1h2l5-1M5 5v3l-2 5M7 5v3l1 1M9 9l5 5M14 9l-5 5" /></S></Slot>
        <Slot $l={4} $w={124} $j="flex-start">Accessibility: Investigate</Slot>
        <Slot $l={527} $w={15}><S w={15} h={14}><L d="M.5 3.500v-3h3M11.500.5h3v3M.5 10.500v3h3M11.500 13.500h3v-3M4.500 2.500h4l2.500 2.500v6.500H4.500z" /></S></Slot>
        <Slot $l={3} $w={30} $j="flex-start">Focus</Slot>
        <Slot $l={24} $w={14}><S w={14} h={12}><L d="M7 1.500C5 .5 2 .5.500.5v10c2 0 5 0 6.500 1 1.500-1 4.500-1 6.500-1V.5c-2 0-5 0-6.500 1zM7 1.500v10M2 3.500h3.500M2 6h3.500M8.500 3.500H12M8.500 6H12" /></S></Slot>
        <SelectedView $l={14} $w={40}><S w={12} h={14}><L d="M.5.500h11v13H.5zM2.500 3.500h7M2.500 6h7M2.500 8.500h7M2.500 11h7" /></S></SelectedView>
        <Slot $l={13} $w={14}><S w={15} h={14}><L d="M.5.500h10v13H.5zM2.500 3.500h6M2.500 6h4M2.500 8.500h3" /><circle cx="11" cy="10" r="3.800" fill="#f3f2f1" stroke="#444" /><L d="M7.500 10h7M11 6.500v7" /></S></Slot>
        <Slot $l={19} $w={8}><S w={8} h={1}><path d="M0 .5h8" stroke="#444" /></S></Slot>
        <ZoomTrack><ZoomKnob /><ZoomTick /></ZoomTrack>
        <Slot $l={4} $w={8}><S w={8} h={8}><L d="M0 4h8M4 0v8" /></S></Slot>
        <Slot $l={14} $w={22} $j="flex-start">90%</Slot>
      </StatusBar>

      <TaskBar>
        <TaskApp $w={48}><S w={16} h={16}><path d="M0 2.200l6.600-.9v6.400H0zM7.400 1.200L16 0v7.700H7.400zM0 8.400h6.600v6.400L0 13.900zM7.400 8.400H16V16l-8.600-1.200z" fill="#fff" /></S></TaskApp>
        <TaskSearch><MagI c="#222" s={16} />Type here to search</TaskSearch>
        <TaskApp $w={48}><S w={16} h={16}><circle cx="8" cy="8" r="6.500" fill="none" stroke="#fff" strokeWidth="2" /></S></TaskApp>
        <TaskApp $w={50}><S w={16} h={15}><L d="M.5 1h10M2.500 4h8v7h-8zM.5 14h10M13.500 0v4M13.500 6v3M13.500 11v4" c="#fff" sw={1.100} /></S></TaskApp>
        <TaskApp><Edge /></TaskApp>
        <TaskApp><Folder /></TaskApp>
        <TaskApp><Store /></TaskApp>
        <TaskApp><Mail /></TaskApp>
        <TaskApp><M365 /></TaskApp>
        <TaskApp $active $bar><Word /></TaskApp>
        <TaskApp><Ppt /></TaskApp>
        <TaskApp><Xl /></TaskApp>
        <TaskApp $bar $w={40} $l={4.500}><Chrome /></TaskApp>
        <Slot $l={117} $w={20}><S w={20} h={20}><rect x="1" y="2" width="2.500" height="18" fill="#d98c5f" /><circle cx="2" cy="2" r="1.500" fill="#d98c5f" /><path d="M3 3l17 1v5L3 11z" fill="#e8e8e8" /><path d="M6 3.200h3v7H6zM13 3.600h3v6h-3z" fill="#d9435a" /></S></Slot>
        <TrayText $l={10} $w={40} $fs={13.500} $j="flex-start">High...</TrayText>
        <Slot $l={17} $w={12}><S w={12} h={7}><L d="M.5 6.500L6 1l5.500 5.500" c="#fff" sw={1.200} /></S></Slot>
        <Slot $l={13} $w={12}><S w={12} h={15}><L d="M2 3.500Q5 1 9 3.500M2 11.500Q5 14 9 11.500" c="#fff" /><rect x=".5" y="5" width="7.500" height="6" rx="1" fill="none" stroke="#fff" /><L d="M8 7l3-1.500v5L8 8.500" c="#fff" /></S></Slot>
        <Slot $l={9} $w={16}><S w={16} h={10}><path d="M3 10a3 3 0 0 1 0-6c1-3 6-4 8-1 3 0 5 2 5 4s-1 3-3 3z" fill="#e0e0e0" /></S></Slot>
        <Slot $l={9} $w={15}><S w={15} h={9}><L d="M.5.500h12.500v8H.5z" c="#fff" /><path d="M2 2h4v5H2zM13.500 3h1.500v3h-1.500z" fill="#fff" /></S></Slot>
        <Slot $l={8} $w={16}><S w={16} h={15}><L d="M4.500 3.500h11v8h-15V6.500M8 11.500v3M5 14.500h6M.5.500h4v4h-4z" c="#fff" /></S></Slot>
        <Slot $l={8} $w={16}><S w={16} h={13}><L d="M.5 4.500h3L7 1v11L3.500 8.500h-3zM10 4c1 1 1 4 0 5M12 2.500c2 2 2 6 0 8M14 1c3 3 3 8 0 11" c="#fff" /></S></Slot>
        <TrayText $l={10} $w={24} $fs={11.500}>ENG</TrayText>
        <Clock $l={0}><span>12:47 PM</span><span>2/17/2023</span></Clock>
        <Slot $l={5} $w={24}>
          <S w={24} h={24}><path d="M1 1h18v13H9l-3 3v-3H1z" fill="#fff" /><L d="M5 5h10M5 8h10M5 11h10" c="#555" /><circle cx="16" cy="16" r="7" fill="#333" stroke="#999" /><text x="16" y="20" textAnchor="middle" fontSize="11" fontWeight="700" fill="#fff" fontFamily="Open Sans">1</text></S>
        </Slot>
      </TaskBar>
    </Shell>
  );
}
